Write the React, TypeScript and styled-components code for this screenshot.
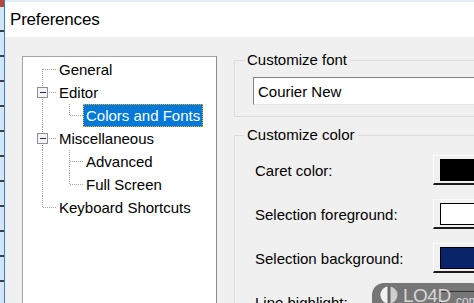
import React from 'react';
import styled, { createGlobalStyle } from 'styled-components';

const GlobalStyle = createGlobalStyle`
  html, body { margin: 0; padding: 0; background: #f0f0f0; }
  body { font-family: "Liberation Sans", Arial, sans-serif; color: #000; }
`;

const Screen = styled.div`
  position: relative;
  display: flex;
  width: 474px;
  height: 303px;
  overflow: hidden;
`;

const DesktopEdge = styled.div`
  flex: 0 0 4px;
  border-right: 1px solid #2f80d6;
  background:
    linear-gradient(#b8463c, #b8463c) no-repeat 0 0 / 4px 7px,
    repeating-linear-gradient(to bottom, #d3e6f7 0 23px, #3a3f47 23px 25px) 0 7px / 4px 100%;
`;

const Dialog = styled.div`
  flex: 1;
  display: flex;
  flex-direction: column;
  min-width: 0;
`;

const TitleBar = styled.div`
  flex: 0 0 35px;
  border-top: 2px solid #e4eef9;
  background: #fff;
  display: flex;
  align-items: center;
  padding-left: 5px;
  font-size: 17px;
  letter-spacing: -0.2px;
`;

const Body = styled.div`
  flex: 1;
  min-height: 0;
  display: flex;
  align-items: flex-start;
  gap: 17px;
  padding: 14px 0 0 17px;
  background: #f0f0f0;
`;

const TreeBox = styled.div`
  flex: 0 0 auto;
  width: 187px;
  height: 260px;
  margin-top: 5px;
  padding: 1px 0 0 6px;
  box-sizing: content-box;
  background: #fff;
  border: 1px solid #a5a5a5;
  border-right-color: #8c8c8c;
`;

const TreeRow = styled.div`
  display: flex;
  height: 23px;
  align-items: stretch;
`;

const TreeLabel = styled.span<{ $selected?: boolean }>`
  padding: 0 3px;
  line-height: 23px;
  font-size: 15px;
  white-space: nowrap;
  box-sizing: border-box;
  color: ${p => (p.$selected ? '#fff' : '#000')};
  background: ${p => (p.$selected ? '#0078d7' : 'transparent')};
  outline: ${p => (p.$selected ? '1px dotted #f2b21c' : 'none')};
  outline-offset: -1px;
`;

const RightPanel = styled.div`
  flex: 0 0 280px;
  display: flex;
  flex-direction: column;
  gap: 9px;
`;

const Group = styled.fieldset<{ $padTop: number }>`
  margin: 0;
  min-width: 0;
  padding: ${p => p.$padTop}px 0 11px 0;
  border: 1px solid #dcdcdc;
  border-right: none;
`;

const Legend = styled.legend`
  margin-left: 9px;
  padding: 0 3px;
  line-height: 18px;
  font-size: 15px;
`;

const FontBox = styled.div`
  height: 28px;
  margin-left: 18px;
  box-sizing: border-box;
  display: flex;
  align-items: center;
  padding-left: 4px;
  font-size: 15px;
  background: #fff;
  border: 1px solid #828282;
  border-right: none;
  border-bottom-color: #e3e3e3;
`;

const ColorRow = styled.div`
  display: grid;
  grid-template-columns: 178px 60px;
  align-items: center;
  height: 44px;
  padding-left: 20px;
  font-size: 15px;
`;

const ColorButton = styled.div`
  height: 30px;
  box-sizing: border-box;
  padding: 3px 0 2px 6px;
  border-top: 1px solid #fcfcfc;
  border-left: 1px solid #fcfcfc;
  border-bottom: 2px solid #1c1c1c;
  background: #f0f0f0;
`;

const Swatch = styled.div<{ $color: string }>`
  height: 22px;
  box-sizing: border-box;
  border: 1px solid #000;
  border-right: none;
  background: ${p => p.$color};
`;

const Watermark = styled.div`
  position: absolute;
  left: 372px;
  top: 283px;
  width: 112px;
  height: 32px;
  border-radius: 12px;
  background: rgba(70, 70, 70, 0.72);
  display: flex;
  align-items: center;
  gap: 2px;
  padding: 0 0 8px 5px;
  box-sizing: border-box;
  color: #d6d6d6;
`;

const MarkText = styled.span`
  font-size: 19px;
  letter-spacing: -0.5px;
  line-height: 1;
`;

const MarkSmall = styled.span`
  font-size: 12px;
  align-self: flex-end;
  margin-bottom: -1px;
`;

type Conn = 'first' | 'mid' | 'last';

type Item = {
  label: string;
  guides: boolean[];
  conn: Conn;
  expander?: boolean;
  selected?: boolean;
};

const items: Item[] = [
  { label: 'General', guides: [], conn: 'first' },
  { label: 'Editor', guides: [], conn: 'mid', expander: true },
  { label: 'Colors and Fonts', guides: [true], conn: 'last', selected: true },
  { label: 'Miscellaneous', guides: [], conn: 'mid', expander: true },
  { label: 'Advanced', guides: [true], conn: 'mid' },
  { label: 'Full Screen', guides: [true], conn: 'last' },
  { label: 'Keyboard Shortcuts', guides: [], conn: 'last' },
];

const dot = { stroke: '#a0a0a0', strokeWidth: 1, strokeDasharray: '1 1' };

function Guide({ on }: { on: boolean }) {
  return (
    <svg width="27" height="23" shapeRendering="crispEdges">
      {on && <line x1="13.5" y1="0" x2="13.5" y2="23" {...dot} />}
    </svg>
  );
}

function Connector({ conn, expander }: { conn: Conn; expander?: boolean }) {
  const y1 = conn === 'first' ? 11 : 0;
  const y2 = conn === 'last' ? 12 : 23;
  return (
    <svg width="27" height="23" shapeRendering="crispEdges">
      <line x1="13.5" y1={y1} x2="13.5" y2={y2} {...dot} />
      <line x1="14" y1="11.5" x2="27" y2="11.5" {...dot} />
      {expander && (
        <g>
          <rect x="8.5" y="6.5" width="10" height="10" fill="#f4f4f4" stroke="#8f8f8f" />
          <line x1="11" y1="11.5" x2="17" y2="11.5" stroke="#1d2f4e" />
        </g>
      )}
    </svg>
  );
}

function LogoMark() {
  return (
    <svg width="24" height="20" viewBox="0 0 24 20">
      <circle cx="12" cy="10" r="8.5" fill="#cfcfcf" />
      <path d="M12 1.5 A8.5 8.5 0 0 0 12 18.5 Z" fill="#f2f2f2" />
      <rect x="10.5" y="1" width="3" height="18" fill="#6a6a6a" />
    </svg>
  );
}

const colorRows = [
  { label: 'Caret color:', color: '#000000' },
  { label: 'Selection foreground:', color: '#ffffff' },
  { label: 'Selection background:', color: '#0a246a' },
  { label: 'Line highlight:', color: '#f0f0f0' },
];

export default function App() {
  return (
    <Screen>
      <GlobalStyle />
      <DesktopEdge />
      <Dialog>
        <TitleBar>Preferences</TitleBar>
        <Body>
          <TreeBox>
            {items.map(it => (
              <TreeRow key={it.label}>
                {it.guides.map((g, i) => (
                  <Guide key={i} on={g} />
                ))}
                <Connector conn={it.conn} expander={it.expander} />
                <TreeLabel $selected={it.selected}>{it.label}</TreeLabel>
              </TreeRow>
            ))}
          </TreeBox>
          <RightPanel>
            <Group $padTop={8}>
              <Legend>Customize font</Legend>
              <FontBox>Courier New</FontBox>
            </Group>
            <Group $padTop={4}>
              <Legend>Customize color</Legend>
              {colorRows.map(r => (
                <ColorRow key={r.label}>
                  <span>{r.label}</span>
                  <ColorButton>
                    <Swatch $color={r.color} />
                  </ColorButton>
                </ColorRow>
              ))}
            </Group>
          </RightPanel>
        </Body>
      </Dialog>
      <Watermark>
        <LogoMark />
        <MarkText>LO4D</MarkText>
        <MarkSmall>.com</MarkSmall>
      </Watermark>
    </Screen>
  );
}
